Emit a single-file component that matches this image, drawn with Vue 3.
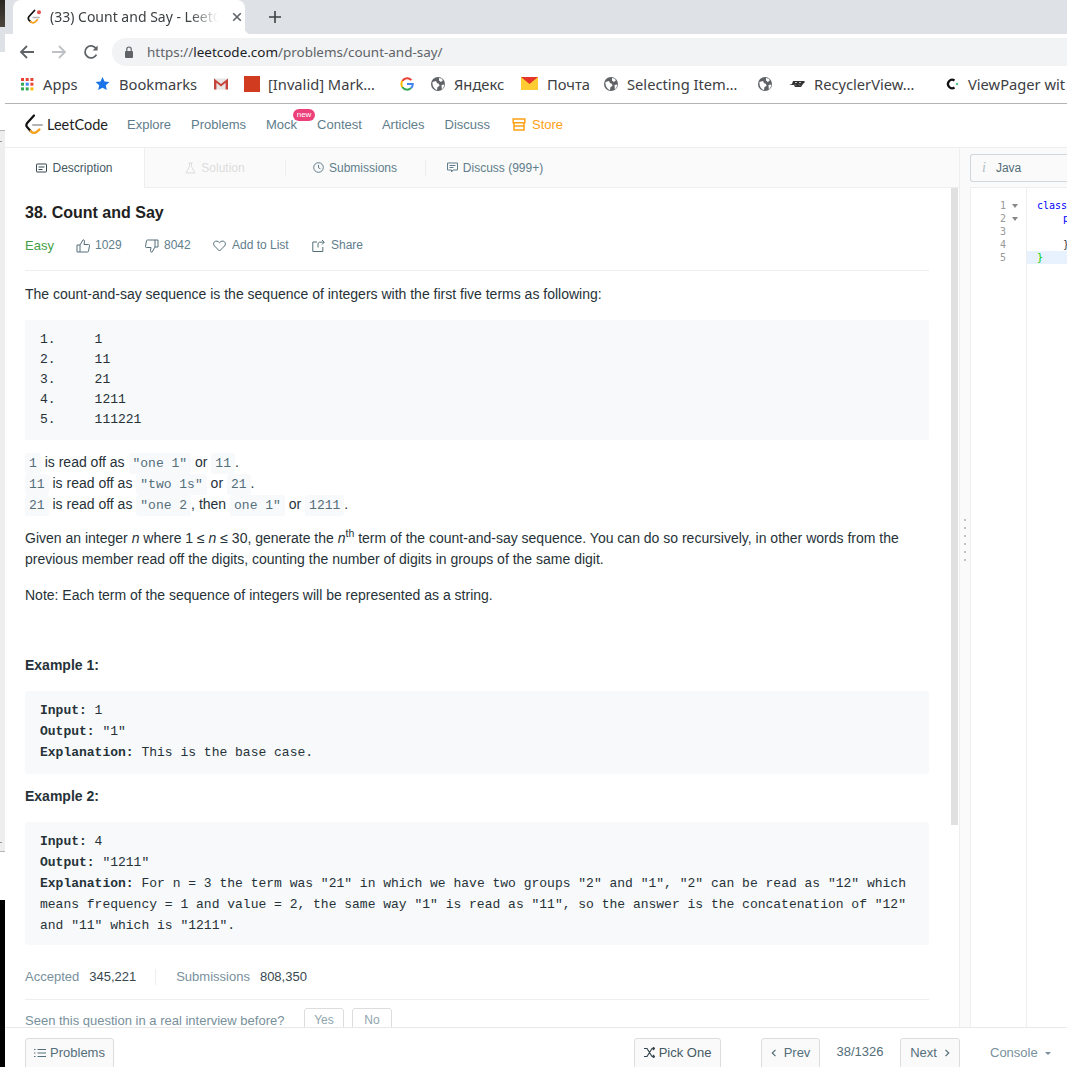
<script setup>
const bookmarks = [
  { icon: 'apps', label: 'Apps' },
  { icon: 'star', label: 'Bookmarks' },
  { icon: 'gmail', label: '' },
  { icon: 'square', label: '[Invalid] Mark…' },
  { icon: 'g', label: '' },
  { icon: 'globe', label: 'Яндекс' },
  { icon: 'mail', label: 'Почта' },
  { icon: 'globe', label: 'Selecting Item…' },
  { icon: 'globe', label: '' },
  { icon: 'rv', label: 'RecyclerView…' },
  { icon: 'c', label: 'ViewPager wit' }
]
const appDots = ['#ea4335', '#ea4335', '#ea4335', '#34a853', '#4285f4', '#ea4335', '#34a853', '#34a853', '#fbbc05']
const navLinks = ['Explore', 'Problems', 'Mock', 'Contest', 'Articles', 'Discuss']
const gutter = [1, 2, 3, 4, 5]
const handleDots = [1, 2, 3, 4, 5, 6]
</script>

<template>
  <div class="screen">
    <div class="edge">
      <i class="edge-dark"></i>
      <i class="edge-tab"></i>
      <i class="edge-white"></i>
      <i class="edge-gray"></i>
      <i class="edge-white2"></i>
      <i class="edge-black"></i>
    </div>
    <div class="window">
      <div class="tabstrip">
        <div class="tab">
          <svg class="fav" width="16" height="16" viewBox="0 0 16 16" fill="none">
            <path d="M7.500 1.500 2 7.500c-1 1.300-.9 2.700.2 3.900l1.300 1.300" stroke="#111" stroke-width="1.700" stroke-linecap="round"/>
            <path d="M3.500 12.700c1.500 1.500 3.500 1.500 5 0l1.800-1.800" stroke="#f89f1b" stroke-width="1.700" stroke-linecap="round"/>
            <path d="M6.200 8.400h6" stroke="#b3b3b3" stroke-width="1.500" stroke-linecap="round"/>
            <circle cx="12" cy="3.200" r="2" fill="#e0524a"/>
          </svg>
          <span class="tab-title">(33) Count and Say - LeetCode</span>
          <svg class="tab-x" width="10" height="10" viewBox="0 0 10 10"><path d="M1.200 1.200l7.600 7.600M8.800 1.200 1.200 8.800" stroke="#5f6368" stroke-width="1.600"/></svg>
        </div>
        <svg class="plus" width="14" height="14" viewBox="0 0 14 14"><path d="M7 1v12M1 7h12" stroke="#3c4043" stroke-width="1.600"/></svg>
      </div>

      <div class="toolbar">
        <svg width="16" height="16" viewBox="0 0 16 16" fill="none"><path d="M15 8H2M8 2 2 8l6 6" stroke="#5f6368" stroke-width="1.800"/></svg>
        <svg width="16" height="16" viewBox="0 0 16 16" fill="none"><path d="M1 8h13M8 2l6 6-6 6" stroke="#bdc1c6" stroke-width="1.800"/></svg>
        <svg width="16" height="16" viewBox="0 0 16 16" fill="none"><path d="M13.400 10.600A6 6 0 1 1 13 4.600" stroke="#5f6368" stroke-width="1.800"/><path d="M14.600 1.600v5h-5z" fill="#5f6368"/></svg>
        <div class="omnibox">
          <svg width="10" height="12" viewBox="0 0 10 12"><rect x="1" y="5" width="8" height="7" rx="1" fill="#5f6368"/><path d="M2.800 5V3.200a2.200 2.200 0 0 1 4.400 0V5" fill="none" stroke="#5f6368" stroke-width="1.200"/></svg>
          <span class="url"><span class="url-soft">https://</span><span class="url-host">leetcode.com</span><span class="url-soft">/problems/count-and-say/</span></span>
        </div>
      </div>

      <div class="bookmarks">
        <div v-for="(b, i) in bookmarks" :key="i" class="bm">
          <svg v-if="b.icon === 'apps'" class="bm-ic" width="14" height="14" viewBox="0 0 14 14">
            <rect v-for="(c, k) in appDots" :key="k" :x="1 + (k % 3) * 4.7" :y="1 + Math.floor(k / 3) * 4.7" width="3" height="3" :fill="c"/>
          </svg>
          <svg v-else-if="b.icon === 'star'" class="bm-ic" width="15" height="15" viewBox="0 0 16 16"><path d="M8 1l2.200 4.800 5.200.6-3.900 3.500 1.100 5.100L8 12.400 3.400 15l1.100-5.100L.6 6.400l5.200-.6z" fill="#1a73e8"/></svg>
          <svg v-else-if="b.icon === 'gmail'" class="bm-ic" width="16" height="14" viewBox="0 0 16 14"><rect x="1" y="1.500" width="14" height="11" fill="#e8e6e4"/><path d="M1 12.500v-11l7 5.600 7-5.600v11h-2.400V5.800L8 9.600 3.400 5.800v6.700z" fill="#c5433a"/></svg>
          <i v-else-if="b.icon === 'square'" class="red-square"></i>
          <svg v-else-if="b.icon === 'g'" class="bm-ic" width="14" height="14" viewBox="0 0 14 14" fill="none">
            <path d="M11.400 3.100A5.700 5.700 0 0 0 2.300 4" stroke="#ea4335" stroke-width="2"/>
            <path d="M2.300 4a5.700 5.700 0 0 0 0 6" stroke="#fbbc05" stroke-width="2"/>
            <path d="M2.300 10a5.700 5.700 0 0 0 8.800 1" stroke="#34a853" stroke-width="2"/>
            <path d="M11.100 11c1-1 1.700-2.300 1.700-4H7" stroke="#4285f4" stroke-width="2"/>
          </svg>
          <svg v-else-if="b.icon === 'globe'" class="bm-ic" width="14" height="14" viewBox="0 0 14 14"><circle cx="7" cy="7" r="7" fill="#5f6368"/><path d="M1.500 5 5 4l1 2 2 1 .5 2-2 1-.5 3C3.500 12.500 1 9 1.500 5zM8 1l3 .8.8 1.700-2 1.500L8 3.500zM10.500 8l2.800-.5c-.2 2.200-1 3.700-2.500 4.800z" fill="#fff"/></svg>
          <svg v-else-if="b.icon === 'mail'" class="bm-ic" width="17" height="13" viewBox="0 0 17 13"><rect width="17" height="13" fill="#ffcc33"/><path d="M0 0h17L8.500 7z" fill="#e5352a"/></svg>
          <svg v-else-if="b.icon === 'rv'" class="bm-ic" width="16" height="8" viewBox="0 0 16 8"><path d="M0 5l3-1 1-3h11l1 1-2 2-2 3H6L5 5z" fill="#333"/><path d="M6 2.500h2M10 2.500h2M6 4.500l1 1M10 4.500l1 1" stroke="#fff" stroke-width=".7"/></svg>
          <svg v-else class="bm-ic" width="14" height="14" viewBox="0 0 14 14" fill="none"><path d="M9.500 3.500a4.200 4.200 0 1 0 0 7" stroke="#111" stroke-width="2.200"/><circle cx="12" cy="7" r="1.300" fill="#5ec28f"/></svg>
          <span v-if="b.label" class="bm-label">{{ b.label }}</span>
        </div>
      </div>

      <div class="sitebar">
        <div class="logo">
          <svg width="20" height="22" viewBox="0 0 20 22" fill="none">
            <path d="M9 1.500 2.200 9c-1.200 1.500-1.100 3 .1 4.300l3.200 3.700" stroke="#111" stroke-width="2.200" stroke-linecap="round"/>
            <path d="M5.500 17c2 2.400 4.500 2.400 6.500.6l2.500-2.200" stroke="#f89f1b" stroke-width="2.200" stroke-linecap="round"/>
            <path d="M8 11h9" stroke="#b3b3b3" stroke-width="2" stroke-linecap="round"/>
          </svg>
          <span class="logo-text">LeetCode</span>
        </div>
        <a v-for="n in navLinks" :key="n" class="nav-link">{{ n }}<span v-if="n === 'Mock'" class="badge">new</span></a>
        <a class="store">
          <svg width="14" height="13" viewBox="0 0 14 13" fill="none" stroke="#ffa116" stroke-width="1.500"><path d="M1.200 1h11.600v3.800H1.200zM2 5v7h10V5M2 8h10"/></svg>
          Store
        </a>
      </div>

      <div class="workspace">
        <section class="left">
          <div class="tabs">
            <div class="dtab active">
              <svg width="11" height="10" viewBox="0 0 11 10" fill="none" stroke="#37474f"><rect x=".5" y="1" width="10" height="8" rx=".5"/><path d="M2.500 4h6M2.500 6.500h4"/></svg>
              Description
            </div>
            <div class="dtab disabled">
              <svg width="11" height="12" viewBox="0 0 11 12" fill="none" stroke="#ddd"><path d="M3.500 1h4M4.500 1v3.500L1 11h9L6.500 4.500V1"/></svg>
              Solution
            </div>
            <div class="dtab sep">
              <svg width="11" height="11" viewBox="0 0 11 11" fill="none" stroke="#607d8b"><circle cx="5.500" cy="5.500" r="4.800"/><path d="M5.500 2.800v3l2 1"/></svg>
              Submissions
            </div>
            <div class="dtab sep">
              <svg width="11" height="11" viewBox="0 0 11 11" fill="none" stroke="#607d8b"><path d="M.5 1h10v7H6l-1.500 2V8h-4z"/><path d="M2.500 3.500h6M2.500 5.500h4"/></svg>
              Discuss (999+)
            </div>
          </div>

          <div class="left-body">
            <article class="desc">
              <h1 class="title">38. Count and Say</h1>
              <div class="meta">
                <span class="easy">Easy</span>
                <span class="meta-item m-like">
                  <svg width="14" height="14" viewBox="0 0 14 14" fill="none" stroke="#546e7a"><path d="M4 6h-3v7h3zM4 6l3-5.200c1.200 0 1.800.9 1.500 2L8 5.500h4.700c.6 0 .9.500.8 1l-1 5.800c-.1.400-.4.700-.8.700H4"/></svg>
                  1029
                </span>
                <span class="meta-item m-dislike">
                  <svg width="14" height="14" viewBox="0 0 14 14" fill="none" stroke="#546e7a"><path d="M10 8h3V1h-3zM10 8l-3 5.200c-1.200 0-1.800-.9-1.500-2L6 8.500H1.300c-.6 0-.9-.5-.8-1l1-5.800c.1-.4.4-.7.800-.7H10"/></svg>
                  8042
                </span>
                <span class="meta-item m-list">
                  <svg width="13" height="12" viewBox="0 0 13 12" fill="none" stroke="#546e7a"><path d="M6.500 11 1.500 6C.2 4.600.4 2.800 1.500 1.800c1.300-1.100 3.500-1 5 .9 1.500-1.900 3.700-2 5-.9 1.100 1 1.300 2.800 0 4.200z"/></svg>
                  Add to List
                </span>
                <span class="meta-item m-share">
                  <svg width="13" height="13" viewBox="0 0 13 13" fill="none" stroke="#546e7a"><path d="M5 3H.8v9.500h10V8M6 8.500V5c0-1 .8-1.800 1.800-1.800H12M10 1l2.300 2.200L10 5.500"/></svg>
                  Share
                </span>
              </div>

              <p class="first">The count-and-say sequence is the sequence of integers with the first five terms as following:</p>

              <pre class="block seq">1.     1
2.     11
3.     21
4.     1211
5.     111221</pre>

              <p class="reads">
                <code>1</code> is read off as <code>"one 1"</code> or <code>11</code>.<br>
                <code>11</code> is read off as <code>"two 1s"</code> or <code>21</code>.<br>
                <code>21</code> is read off as <code>"one 2</code>, then <code>one 1"</code> or <code>1211</code>.
              </p>

              <p class="given">Given an integer <em>n</em> where 1 ≤ <em>n</em> ≤ 30, generate the <em>n</em><sup>th</sup> term of the count-and-say sequence. You can do so recursively, in other words from the previous member read off the digits, counting the number of digits in groups of the same digit.</p>

              <p class="note">Note: Each term of the sequence of integers will be represented as a string.</p>

              <p class="ex ex1"><strong>Example 1:</strong></p>
              <pre class="block ex-pre pre-one"><strong>Input:</strong> 1
<strong>Output:</strong> "1"
<strong>Explanation:</strong> This is the base case.</pre>

              <p class="ex ex2"><strong>Example 2:</strong></p>
              <pre class="block ex-pre pre-two"><strong>Input:</strong> 4
<strong>Output:</strong> "1211"
<strong>Explanation:</strong> For n = 3 the term was "21" in which we have two groups "2" and "1", "2" can be read as "12" which
means frequency = 1 and value = 2, the same way "1" is read as "11", so the answer is the concatenation of "12"
and "11" which is "1211".</pre>

              <div class="stats">
                <span class="stat-k">Accepted</span><span class="stat-v">345,221</span>
                <i class="stat-sep"></i>
                <span class="stat-k">Submissions</span><span class="stat-v">808,350</span>
              </div>
              <div class="seen">
                <span>Seen this question in a real interview before?</span>
                <button class="seen-btn">Yes</button>
                <button class="seen-btn">No</button>
              </div>
            </article>
            <div class="scrolltrack"><div class="scrollthumb"></div></div>
          </div>
        </section>

        <div class="handle">
          <i v-for="d in handleDots" :key="d"></i>
        </div>

        <section class="right">
          <div class="lang-row">
            <div class="lang"><em>i</em><span>Java</span></div>
          </div>
          <div class="editor">
            <div class="gutter">
              <div v-for="g in gutter" :key="g" class="gline">
                <span class="gnum">{{ g }}</span>
                <i v-if="g < 3" class="fold"></i>
              </div>
            </div>
            <div class="code">
              <div class="cline kw">class</div>
              <div class="cline kw indent">p</div>
              <div class="cline">&nbsp;</div>
              <div class="cline indent">}</div>
              <div class="cline current"><span class="match">}</span></div>
            </div>
          </div>
        </section>
      </div>

      <footer class="footer">
        <button class="fbtn problems">
          <svg width="12" height="10" viewBox="0 0 12 10" stroke="#546e7a"><path d="M3.500 1.500H12M3.500 5H12M3.500 8.500H12M0 1.500h1.500M0 5h1.500M0 8.500h1.500"/></svg>
          Problems
        </button>
        <button class="fbtn pick">
          <svg width="11" height="11" viewBox="0 0 11 11" fill="none" stroke="#37474f" stroke-width="1.200"><path d="M0 1.500 3 1.500 8 9.500H10.500M0 9.500H3L8 1.500H10.500M8.800 0 10.800 1.500 8.800 3M8.800 8 10.800 9.500 8.800 11"/></svg>
          Pick One
        </button>
        <button class="fbtn prev">
          <svg width="6" height="8" viewBox="0 0 6 8" fill="none" stroke="#546e7a" stroke-width="1.200"><path d="M4.500 .8 1.300 4l3.200 3.200"/></svg>
          Prev
        </button>
        <span class="count">38/1326</span>
        <button class="fbtn next">
          Next
          <svg width="6" height="8" viewBox="0 0 6 8" fill="none" stroke="#546e7a" stroke-width="1.200"><path d="M1.500 .8 4.700 4 1.500 7.200"/></svg>
        </button>
        <span class="console">Console<i class="caret"></i></span>
      </footer>
    </div>
  </div>
</template>

<style scoped>
.screen {
  width: 1067px;
  height: 1067px;
  display: flex;
  overflow: hidden;
  background: #fff;
  font-family: "Liberation Sans", Arial, sans-serif;
}
.edge { width: 5px; flex: none; display: flex; flex-direction: column; }
.edge i { display: block; }
.edge-dark { height: 27px; background: linear-gradient(180deg, #2a2722, #4b463d); }
.edge-tab { height: 25px; background: #dee1e6; }
.edge-white { height: 78px; background: #fff; }
.edge-gray {
  height: 722px;
  box-sizing: border-box;
  background:
    linear-gradient(#999, #999) 0 10px / 2px 1px no-repeat,
    linear-gradient(#999, #999) 0 711px / 2px 1px no-repeat,
    #eee;
  border-top: 1px solid #b5b5b5;
  border-bottom: 1px solid #b5b5b5;
}
.edge-white2 { height: 48px; background: #fff; }
.edge-black { flex: 1; background: #000; }

.window { flex: 1; min-width: 0; display: flex; flex-direction: column; }

.tabstrip { height: 34px; background: #dee1e6; display: flex; align-items: center; flex: none; }
.tab {
  position: relative;
  margin-left: 8px;
  width: 232px;
  height: 34px;
  background: #fff;
  border-radius: 8px 8px 0 0;
  display: flex;
  align-items: center;
  padding-left: 14px;
  box-sizing: border-box;
}
.tab::after {
  content: "";
  position: absolute;
  right: -6px;
  bottom: 0;
  width: 6px;
  height: 6px;
  background: radial-gradient(circle at 100% 0, transparent 6px, #fff 6.500px);
}
.tab-title {
  margin-left: 7px;
  width: 168px;
  white-space: nowrap;
  overflow: hidden;
  font: 14px/20px "Noto Sans", sans-serif;
  color: #3c4043;
  -webkit-mask-image: linear-gradient(90deg, #000 140px, transparent 168px);
  mask-image: linear-gradient(90deg, #000 140px, transparent 168px);
}
.tab-x { margin-left: 14px; }
.plus { margin-left: 23px; }

.toolbar { height: 32px; box-sizing: border-box; padding-top: 4px; flex: none; display: flex; align-items: center; padding-left: 14px; gap: 16px; }
.omnibox {
  flex: 1;
  height: 28px;
  margin-left: -3px;
  background: #f1f3f4;
  border-radius: 14px 0 0 14px;
  display: flex;
  align-items: center;
  padding-left: 12px;
  gap: 13px;
}
.url { font: 13.450px/20px "Noto Sans", sans-serif; white-space: nowrap; }
.url-soft { color: #5f6368; }
.url-host { color: #202124; }

.bookmarks {
  height: 38px;
  flex: none;
  box-sizing: border-box;
  padding: 0 0 2px 15px;
  border-bottom: 1px solid #b4b4b4;
  display: grid;
  grid-template-columns: 75px 118px 31px 156px 31px 90px 83px 154px 31px 156px 140px;
  align-items: center;
  overflow: hidden;
}
.bm { display: flex; align-items: center; min-width: 0; white-space: nowrap; }
.bm-ic { flex: none; margin-right: 9px; }
.bm-label { font: 14.700px/20px "Noto Sans", sans-serif; color: #3c4043; }
.red-square { width: 16px; height: 16px; background: #d13b20; margin-right: 8px; display: block; }

.sitebar {
  height: 43px;
  flex: none;
  box-sizing: border-box;
  display: flex;
  align-items: center;
  padding: 0 0 2px 20px;
}
.logo { display: flex; align-items: center; width: 102px; }
.logo-text { font: 14.500px/20px "Lato", sans-serif; color: #212121; margin-left: 2px; }
.nav-link { position: relative; font-size: 13px; color: #607d8b; margin-right: 20px; }
.badge {
  position: absolute;
  top: -8px;
  right: -18px;
  width: 22px;
  height: 12px;
  border-radius: 6px;
  background: #ec407a;
  color: #fff;
  font-size: 8px;
  line-height: 12px;
  text-align: center;
}
.store { display: flex; align-items: center; gap: 6px; color: #ffa116; font-size: 13px; margin-left: 2px; }

.workspace { flex: 1; min-height: 0; display: flex; border-top: 1px solid #eee; border-bottom: 1px solid #e8e8e8; background: #fafafa; }
.left { width: 955px; flex: none; display: flex; flex-direction: column; background: #fff; border-right: 1px solid #eee; box-sizing: border-box; }
.tabs { height: 40px; flex: none; display: flex; background: #fafafa; border-bottom: 1px solid #eee; box-sizing: border-box; }
.dtab {
  position: relative;
  width: 140px;
  height: 39px;
  display: flex;
  align-items: center;
  justify-content: center;
  gap: 5px;
  font-size: 12px;
  color: #607d8b;
}
.dtab.active { background: #fff; height: 40px; color: #455a64; border-right: 1px solid #eee; box-sizing: border-box; }
.dtab.disabled { color: #ddd; }
.dtab.sep::before {
  content: "";
  position: absolute;
  left: 0;
  top: 12px;
  height: 16px;
  border-left: 1px solid #eee;
}
.left-body { flex: 1; min-height: 0; display: flex; overflow: hidden; }
.desc { flex: 1; min-width: 0; padding: 0 20px; color: #263238; font-size: 14px; line-height: 21px; }
.title { margin: 15px 0 0; font-size: 16px; line-height: 20px; font-weight: 700; color: #212121; }
.meta {
  margin-top: 12px;
  height: 20px;
  padding-bottom: 15px;
  border-bottom: 1px solid #eee;
  display: grid;
  grid-template-columns: 51px 69px 68px 99px auto;
  align-items: center;
  font-size: 12px;
  color: #607d8b;
}
.easy { font-size: 13px; color: #43a047; }
.meta-item { display: flex; align-items: center; gap: 5px; }
.m-list, .m-share { gap: 6px; }
p { margin: 0; }
.first { margin-top: 13px; }
.block {
  margin: 0;
  background: #f7f9fa;
  border-radius: 3px;
  font-family: "Liberation Mono", monospace;
  font-size: 13px;
  color: #263238;
  white-space: pre;
}
.seq { margin-top: 15px; padding: 10px 15px; line-height: 20px; }
.ex-pre { line-height: 21px; }
.pre-one { padding: 9px 15px 11px; }
.pre-two { padding: 9px 15px; }
.reads { margin-top: 12px; }
code {
  font-family: "Liberation Mono", monospace;
  font-size: 13px;
  line-height: 1;
  background: #f7f9fa;
  color: #546e7a;
  border-radius: 3px;
  padding: 3px 4px;
}
.given { margin-top: 13px; }
.note { margin-top: 15px; }
sup { font-size: 10.500px; line-height: 0; }
.ex1 { margin-top: 49px; margin-bottom: 15px; }
.ex2 { margin-top: 12px; margin-bottom: 15px; }
.stats {
  margin-top: 21px;
  padding-bottom: 12px;
  border-bottom: 1px solid #eee;
  display: flex;
  align-items: center;
  font-size: 13px;
}
.stat-k { color: #78909c; }
.stat-v { color: #37474f; margin-left: 10px; }
.stat-sep { width: 1px; height: 16px; background: #eee; margin: 0 20px 0 19px; }
.seen { margin-top: 8px; display: flex; align-items: flex-start; font-size: 13px; color: #78909c; }
.seen > span { margin-top: 2px; width: 279px; }
.seen-btn {
  width: 40px;
  height: 32px;
  margin-right: 8px;
  background: #fff;
  border: 1px solid #ddd;
  border-radius: 3px;
  font: 12px "Liberation Sans", sans-serif;
  color: #90a4ae;
  padding: 0 0 8px;
}
.scrolltrack { width: 10px; flex: none; }
.scrollthumb { width: 7px; height: 637px; margin-left: 2px; background: #e0e0e0; }

.handle {
  width: 10px;
  flex: none;
  padding-top: 371px;
  display: flex;
  flex-direction: column;
  align-items: center;
  gap: 6px;
  box-sizing: border-box;
}
.handle i { width: 2px; height: 2px; background: #bcc6c9; display: block; }

.right { flex: 1; min-width: 0; display: flex; flex-direction: column; }
.lang-row { height: 39px; flex: none; padding-top: 6px; box-sizing: border-box; }
.lang {
  width: 120px;
  height: 28px;
  box-sizing: border-box;
  background: #fafafa;
  border: 1px solid #cfd8dc;
  border-right: 0;
  border-radius: 3px 0 0 3px;
  display: flex;
  align-items: center;
  font-size: 12px;
  color: #546e7a;
  padding-left: 11px;
  gap: 10px;
}
.lang em { font-family: "Liberation Serif", serif; color: #b0bec5; font-size: 14px; }
.editor { flex: 1; min-height: 0; display: flex; background: #fff; border-top: 1px solid #eee; border-left: 1px solid #eee; }
.gutter { width: 55px; flex: none; padding-top: 11px; border-right: 1px solid #eee; }
.gline { height: 13px; position: relative; font: 10px/13px "DejaVu Sans Mono", monospace; color: #999; text-align: right; padding-right: 20px; }
.fold {
  position: absolute;
  right: 8px;
  top: 5px;
  border: 3px solid transparent;
  border-top: 4px solid #888;
  border-bottom: 0;
}
.code { flex: 1; min-width: 0; padding-top: 11px; font: 10px/13px "DejaVu Sans Mono", monospace; color: #333; }
.cline { padding-left: 10px; white-space: pre; height: 13px; }
.indent { padding-left: 36px; }
.kw { color: #0000ff; }
.current { background: #e8f2ff; }
.match { color: #00cc00; }

.footer { height: 39px; flex: none; overflow: hidden; position: relative; display: flex; padding: 10px 0 0 20px; box-sizing: border-box; font-size: 13px; color: #546e7a; }
.fbtn {
  height: 34px;
  flex: none;
  box-sizing: border-box;
  background: #fafafa;
  border: 1px solid #ddd;
  border-radius: 3px;
  font: 13px/1 "Liberation Sans", sans-serif;
  color: #546e7a;
  display: flex;
  align-items: center;
  justify-content: center;
  padding: 0 0 5px;
  gap: 4px;
}
.problems { width: 89px; }
.pick { width: 87px; margin-left: 520px; color: #455a64; }
.prev { width: 59px; margin-left: 40px; gap: 7px; }
.count { width: 80px; text-align: center; line-height: 28px; color: #546e7a; }
.next { width: 60px; gap: 7px; }
.console { margin-left: 30px; line-height: 28px; color: #78909c; display: flex; align-items: center; height: 29px; white-space: nowrap; }
.caret { margin-left: 7px; margin-top: 2px; border: 3px solid transparent; border-top: 3px solid #78909c; border-bottom: 0; }
</style>
